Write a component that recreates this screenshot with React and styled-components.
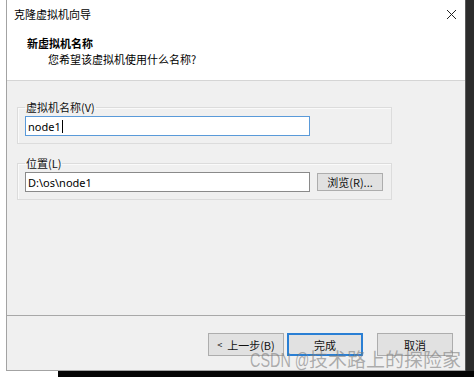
import React from "react";
import styled, { createGlobalStyle } from "styled-components";

const GlobalStyle = createGlobalStyle`
  html, body {
    margin: 0;
    padding: 0;
    background: #fff;
  }
  body {
    font-family: "Noto Sans", "Noto Sans CJK SC", sans-serif;
    font-size: 11px;
    color: #000;
  }
`;

const Screen = styled.div`
  position: relative;
  width: 474px;
  height: 377px;
  display: flex;
  flex-direction: column;
  overflow: hidden;
  background: #fff;
`;

const TopRow = styled.div`
  display: flex;
  height: 371px;
`;

const Gap = styled.div`
  width: ${(p) => p.w}px;
  flex-shrink: 0;
  background: #fff;
`;

const DarkStrip = styled.div`
  width: 8px;
  background: #2c2c2c;
  border-left: 1px solid #5a5a5a;
`;

const BottomRow = styled.div`
  display: flex;
  flex: 1;
`;

const BlackFill = styled.div`
  flex: 1;
  background: #050505;
`;

const Window = styled.div`
  flex: 1;
  display: flex;
  flex-direction: column;
  background: #f0f0f0;
  border-left: 1px solid #a3a3a3;
  border-bottom: 1px solid #a3a3a3;
`;

const Header = styled.div`
  height: 80px;
  background: #fff;
  border-bottom: 1px solid #d5d5d5;
  flex-shrink: 0;
`;

const TitleBar = styled.div`
  height: 28px;
  display: flex;
  align-items: center;
  justify-content: space-between;
  padding: 0 7px 0 7px;
  font-family: "Noto Sans CJK SC", sans-serif;
  font-size: 11px;
`;

const CloseIcon = styled.svg`
  width: 11px;
  height: 11px;
  margin-right: 1px;
`;

const Heading = styled.div`
  margin-top: 7px;
  padding-left: 20px;
  line-height: 16px;
  font-family: "Noto Sans CJK SC", sans-serif;
  font-weight: 700;
  font-size: 11px;
`;

const SubHeading = styled.div`
  padding-left: 41px;
  line-height: 16px;
  font-family: "Noto Sans CJK SC", sans-serif;
  font-size: 11px;
`;

const Body = styled.div`
  flex: 1;
  display: flex;
  flex-direction: column;
  gap: 12px;
  padding: 19px 0 0 10px;
`;

const Group = styled.fieldset`
  box-sizing: border-box;
  width: 375px;
  margin: 0;
  padding: 2px 8px 7px 7px;
  border: 1px solid #dcdcdc;
  box-shadow: inset 1px 1px 0 #fafafa;
  display: flex;
  align-items: center;
  gap: 7px;
`;

const Legend = styled.legend`
  padding: 0 1px;
  margin-left: 0;
  line-height: 14px;
  font-family: "Noto Sans CJK SC", sans-serif;
  font-size: 11px;
  color: #111;
`;

const TextBox = styled.div`
  box-sizing: border-box;
  width: 285px;
  height: 20px;
  display: flex;
  align-items: center;
  padding-left: 2px;
  background: #fff;
  border: 1px solid ${(p) => (p.focused ? "#5a9ad9" : "#8a8a8a")};
  font-family: "Noto Sans", "Noto Sans CJK SC", sans-serif;
  font-size: 11px;
`;

const Caret = styled.span`
  width: 1px;
  height: 13px;
  background: #000;
  margin-left: 1px;
`;

const Button = styled.div`
  box-sizing: border-box;
  width: ${(p) => p.w || 76}px;
  height: ${(p) => p.h || 23}px;
  display: flex;
  align-items: center;
  justify-content: center;
  background: #e1e1e1;
  border: ${(p) => (p.primary ? "2px solid #2a7fd4" : "1px solid #adadad")};
  font-family: "Noto Sans CJK SC", sans-serif;
  font-size: 11px;
  color: #111;
  flex-shrink: 0;
`;

const Footer = styled.div`
  height: 55px;
  flex-shrink: 0;
  border-top: 1px solid #a8a8a8;
  display: flex;
  justify-content: flex-end;
  align-items: flex-start;
  padding: 17px 12px 0 0;
  box-sizing: border-box;
`;

const ButtonGroup = styled.div`
  display: flex;
  gap: 3px;
  margin-right: 14px;
`;

const Arrow = styled.span`
  font-size: 9px;
  margin-right: 5px;
`;

const Watermark = styled.div`
  position: absolute;
  left: 250px;
  top: 347px;
  display: flex;
  align-items: baseline;
  font-family: "Noto Sans CJK SC", sans-serif;
  font-size: 19px;
  line-height: 24px;
  color: rgba(125, 125, 125, 0.6);
  white-space: nowrap;
`;

const WatermarkLatin = styled.span`
  display: inline-block;
  width: 59px;
  font-family: "Liberation Sans", sans-serif;
  font-size: 20px;
  transform: scaleX(0.72);
  transform-origin: left center;
`;

const WatermarkName = styled.span`
  letter-spacing: 0;
`;

export default function App() {
  return (
    <>
      <GlobalStyle />
      <Screen>
        <TopRow>
          <Gap w={6} />
          <Window>
            <Header>
              <TitleBar>
                <span>克隆虚拟机向导</span>
                <CloseIcon viewBox="0 0 11 11">
                  <path d="M1 1 L10 10 M10 1 L1 10" stroke="#222" strokeWidth="1" />
                </CloseIcon>
              </TitleBar>
              <Heading>新虚拟机名称</Heading>
              <SubHeading>您希望该虚拟机使用什么名称?</SubHeading>
            </Header>
            <Body>
              <Group>
                <Legend>虚拟机名称(V)</Legend>
                <TextBox focused>
                  node1
                  <Caret />
                </TextBox>
              </Group>
              <Group>
                <Legend>位置(L)</Legend>
                <TextBox>D:\os\node1</TextBox>
                <Button w={66} h={18}>
                  浏览(R)...
                </Button>
              </Group>
            </Body>
            <Footer>
              <ButtonGroup>
                <Button>
                  <Arrow>&lt;</Arrow>上一步(B)
                </Button>
                <Button primary>完成</Button>
              </ButtonGroup>
              <Button>取消</Button>
            </Footer>
          </Window>
          <DarkStrip />
        </TopRow>
        <BottomRow>
          <Gap w={58} />
          <BlackFill />
        </BottomRow>
        <Watermark>
          <WatermarkLatin>CSDN @</WatermarkLatin>
          <WatermarkName>技术路上的探险家</WatermarkName>
        </Watermark>
      </Screen>
    </>
  );
}
